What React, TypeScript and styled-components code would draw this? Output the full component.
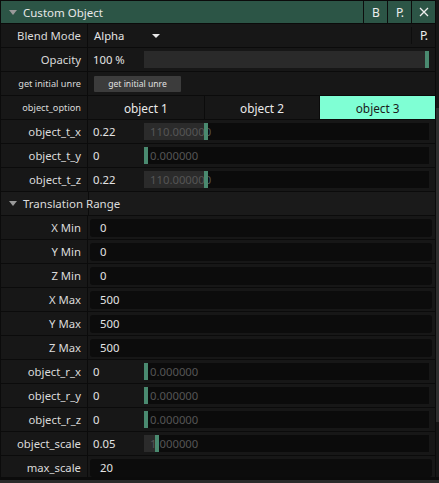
import React from 'react';
import styled, {createGlobalStyle} from 'styled-components';

const GlobalStyle = createGlobalStyle`
  html, body {
    margin: 0;
    padding: 0;
    background: #2a2a2a;
  }
  body {
    font-family: 'Noto Sans', 'Open Sans', sans-serif;
  }
`;

const Panel = styled.div`
  display: flex;
  width: 439px;
  height: 477px;
  overflow: hidden;
  border-bottom: 3px solid #0b0b0b;
  background: #171717;
`;

const Main = styled.div`
  flex: 1;
  display: flex;
  flex-direction: column;
  border-left: 1px solid #0b0b0b;
  border-right: 1px solid #0b0b0b;
  min-width: 0;
`;

const ScrollTrack = styled.div`
  width: 3px;
  background: #161616;
  padding-top: 108px;
  box-sizing: border-box;
`;

const ScrollThumb = styled.div`
  height: 314px;
  background: #2e2e2e;
`;

const Header = styled.div`
  display: flex;
  align-items: stretch;
  height: 24px;
  box-sizing: border-box;
  background: #2c5546;
  border-top: 1px solid #0b0b0b;
  border-bottom: 1px solid #0b0b0b;
  color: #e8e8e8;
  font-size: 11.5px;
  flex-shrink: 0;
`;

const Caret = styled.span`
  width: 0;
  height: 0;
  border-left: 4px solid transparent;
  border-right: 4px solid transparent;
  border-top: 5px solid #9a9a9a;
  margin: 0 6px 0 8px;
`;

const HeaderTitle = styled.div`
  flex: 1;
  display: flex;
  align-items: center;
`;

const CellButton = styled.div`
  width: 24px;
  display: flex;
  align-items: center;
  justify-content: center;
  border-left: 1px solid #0d0d0d;
  font-size: 12px;
  color: #eeeeee;
  box-sizing: border-box;
  letter-spacing: -1px;
`;

const Row = styled.div`
  display: grid;
  grid-template-columns: 87px 1fr;
  height: 24px;
  box-sizing: border-box;
  border-bottom: 1px solid #0b0b0b;
  flex-shrink: 0;
`;

const Label = styled.div<{$small?: boolean}>`
  display: flex;
  align-items: center;
  justify-content: flex-end;
  padding-right: 6px;
  border-right: 1px solid #0b0b0b;
  color: #dadada;
  font-size: ${p => (p.$small ? '9.2px' : '11.3px')};
  white-space: nowrap;
  overflow: hidden;
`;

const Value = styled.div`
  display: flex;
  align-items: center;
  min-width: 0;
  color: #e4e4e4;
  font-size: 11.3px;
`;

const ValueText = styled.span`
  width: 56px;
  padding-left: 5px;
  box-sizing: border-box;
  flex-shrink: 0;
`;

const Select = styled.div`
  flex: 1;
  display: flex;
  align-items: center;
  padding-left: 6px;
  gap: 28px;
`;

const DropArrow = styled.span`
  width: 0;
  height: 0;
  border-left: 4px solid transparent;
  border-right: 4px solid transparent;
  border-top: 4px solid #e8e8e8;
`;

const Bar = styled.div<{$light?: boolean}>`
  position: relative;
  flex: 1;
  height: 17px;
  margin-right: 6px;
  background: ${p => (p.$light ? '#2a2a2a' : '#0b0b0b')};
  overflow: hidden;
`;

const Fill = styled.div`
  position: absolute;
  left: 0;
  top: 0;
  bottom: 0;
  background: #2b2b2b;
`;

const Handle = styled.div`
  position: absolute;
  top: 0;
  bottom: 0;
  width: 4px;
  background: #4a8a70;
`;

const BarText = styled.span`
  position: relative;
  display: block;
  padding-left: 6px;
  line-height: 17px;
  font-size: 11.3px;
  color: #555555;
`;

const SmallButton = styled.button`
  margin-left: 6px;
  width: 87px;
  height: 16px;
  padding: 0;
  border: none;
  border-radius: 1px;
  background: #3c3c3c;
  color: #e0e0e0;
  font-family: 'Noto Sans', 'Open Sans', sans-serif;
  font-size: 8.6px;
`;

const Tabs = styled.div`
  display: grid;
  grid-template-columns: 1fr 1fr 1fr;
  height: 100%;
`;

const Tab = styled.div<{$active?: boolean}>`
  display: flex;
  align-items: center;
  justify-content: center;
  font-size: 11.8px;
  color: ${p => (p.$active ? '#1c1c1c' : '#eaeaea')};
  background: ${p => (p.$active ? '#7fffd4' : 'transparent')};
  border-left: 1px solid #0b0b0b;
  &:first-child {
    border-left: none;
  }
`;

const Input = styled.div`
  flex: 1;
  height: 18px;
  margin: 0 3px 0 2px;
  padding-left: 10px;
  display: flex;
  align-items: center;
  background: #0c0c0c;
  border-radius: 3px;
  color: #e4e4e4;
  font-size: 11.3px;
`;

const Section = styled.div`
  display: flex;
  align-items: center;
  height: 24px;
  box-sizing: border-box;
  border-bottom: 1px solid #0b0b0b;
  color: #dcdcdc;
  font-size: 11.5px;
  background: linear-gradient(to right, transparent 87px, #0b0b0b 87px, #0b0b0b 88px, transparent 88px), #1a1a1a;
  flex-shrink: 0;
`;

function CloseIcon() {
  return (
    <svg width="10" height="10" viewBox="0 0 10 10">
      <path d="M1 1L9 9M9 1L1 9" stroke="#eeeeee" strokeWidth="1.3" />
    </svg>
  );
}

function SliderRow({label, value, num, max}: {label: string; value: string; num: number; max: number}) {
  const pct = (num / max) * 100;
  return (
    <Row>
      <Label>{label}</Label>
      <Value>
        <ValueText>{value}</ValueText>
        <Bar>
          <Fill style={{width: `${pct}%`}} />
          <BarText>{num.toFixed(6)}</BarText>
          <Handle style={{left: `calc(${pct}% - ${pct > 0 ? 3 : 0}px)`}} />
        </Bar>
      </Value>
    </Row>
  );
}

function InputRow({label, value}: {label: string; value: string}) {
  return (
    <Row>
      <Label>{label}</Label>
      <Value>
        <Input>{value}</Input>
      </Value>
    </Row>
  );
}

export default function App() {
  return (
    <>
      <GlobalStyle />
      <Panel>
        <Main>
          <Header>
            <HeaderTitle>
              <Caret />
              Custom Object
            </HeaderTitle>
            <CellButton>B</CellButton>
            <CellButton>P.</CellButton>
            <CellButton>
              <CloseIcon />
            </CellButton>
          </Header>
          <Row>
            <Label>Blend Mode</Label>
            <Value>
              <Select>
                Alpha
                <DropArrow />
              </Select>
              <CellButton>P.</CellButton>
            </Value>
          </Row>
          <Row>
            <Label>Opacity</Label>
            <Value>
              <ValueText>100 %</ValueText>
              <Bar $light>
                <Handle style={{right: 0}} />
              </Bar>
            </Value>
          </Row>
          <Row>
            <Label $small>get initial unre</Label>
            <Value>
              <SmallButton>get initial unre</SmallButton>
            </Value>
          </Row>
          <Row>
            <Label $small>object_option</Label>
            <Tabs>
              <Tab>object 1</Tab>
              <Tab>object 2</Tab>
              <Tab $active>object 3</Tab>
            </Tabs>
          </Row>
          <SliderRow label="object_t_x" value="0.22" num={110} max={500} />
          <SliderRow label="object_t_y" value="0" num={0} max={500} />
          <SliderRow label="object_t_z" value="0.22" num={110} max={500} />
          <Section>
            <Caret />
            Translation Range
          </Section>
          <InputRow label="X Min" value="0" />
          <InputRow label="Y Min" value="0" />
          <InputRow label="Z Min" value="0" />
          <InputRow label="X Max" value="500" />
          <InputRow label="Y Max" value="500" />
          <InputRow label="Z Max" value="500" />
          <SliderRow label="object_r_x" value="0" num={0} max={360} />
          <SliderRow label="object_r_y" value="0" num={0} max={360} />
          <SliderRow label="object_r_z" value="0" num={0} max={360} />
          <SliderRow label="object_scale" value="0.05" num={1} max={20} />
          <InputRow label="max_scale" value="20" />
        </Main>
        <ScrollTrack>
          <ScrollThumb />
        </ScrollTrack>
      </Panel>
    </>
  );
}
